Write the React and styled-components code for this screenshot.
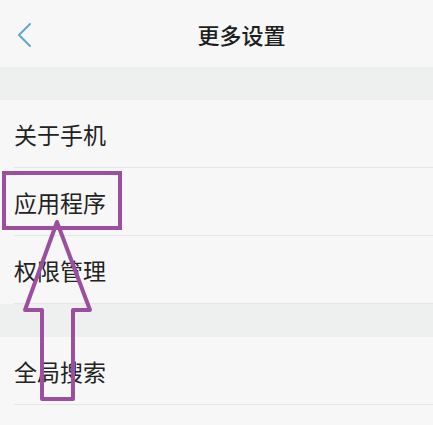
import React from 'react';
import styled, { createGlobalStyle } from 'styled-components';

const GlobalStyle = createGlobalStyle`
  html, body {
    margin: 0;
    padding: 0;
    background: #f7f7f7;
  }
  body {
    font-family: "Noto Sans CJK SC", "Noto Sans", sans-serif;
    color: #222;
  }
`;

const Screen = styled.div`
  position: relative;
  width: 433px;
  height: 425px;
  overflow: hidden;
  background: #f7f7f7;
`;

const Header = styled.header`
  height: 67px;
  display: grid;
  grid-template-columns: 60px 1fr 60px;
  align-items: center;
`;

const BackButton = styled.button`
  border: 0;
  background: none;
  padding: 2px 0 0 16px;
  height: 100%;
  display: flex;
  align-items: center;
  cursor: pointer;
`;

const Title = styled.h1`
  margin: 0;
  text-align: center;
  font-size: 22px;
  font-weight: 500;
  color: #1e1e1e;
  padding-left: 50px;
  line-height: 1;
`;

const Band = styled.div`
  height: 33px;
  background: #eeefef;
`;

const List = styled.ul`
  list-style: none;
  margin: 0;
  padding: 0 0 0 14px;
`;

const Row = styled.li`
  height: 67px;
  display: flex;
  align-items: center;
  font-size: 23px;
  color: #222;
  border-bottom: 1px solid #e6e6e6;
`;

const Overlay = styled.svg`
  position: absolute;
  left: 0;
  top: 0;
  pointer-events: none;
`;

const ChevronLeft = () => (
  <svg width="16" height="26" viewBox="0 0 16 26">
    <path d="M14 2 L3 13 L14 24" fill="none" stroke="#5fa8cf" strokeWidth="2" strokeLinecap="round" strokeLinejoin="round" />
  </svg>
);

const groups = [
  ['关于手机', '应用程序', '权限管理'],
  ['全局搜索'],
];

export default function App() {
  return (
    <Screen>
      <GlobalStyle />
      <Header>
        <BackButton aria-label="返回">
          <ChevronLeft />
        </BackButton>
        <Title>更多设置</Title>
        <span />
      </Header>
      {groups.map((items, i) => (
        <React.Fragment key={i}>
          <Band />
          <List>
            {items.map((label) => (
              <Row key={label}>{label}</Row>
            ))}
          </List>
        </React.Fragment>
      ))}
      <Overlay width="433" height="425" viewBox="0 0 433 425">
        <rect x="4" y="173" width="116" height="55" fill="none" stroke="#9b4f9e" strokeWidth="4" />
        <polygon
          points="57,222 90,310 73,310 73,399 42,399 42,310 25,310"
          fill="none"
          stroke="#9b4f9e"
          strokeWidth="4"
          strokeLinejoin="round"
        />
      </Overlay>
    </Screen>
  );
}
